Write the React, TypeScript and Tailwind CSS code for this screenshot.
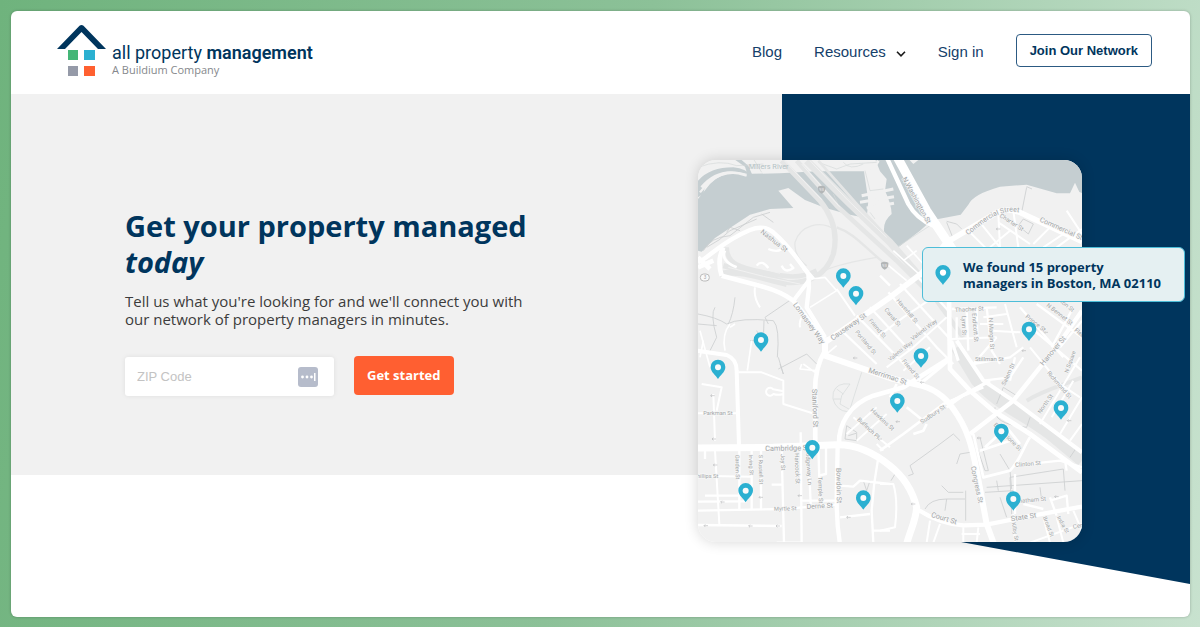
import React from "react";

type Line = { d: string; w: number };
type Label = { t: string; x: number; y: number; r: number; s: number };

const HIGHWAYS: Line[] = [
  { d: "M275 30L390 150C430 200 445 250 430 310C410 375 350 400 290 395L100 345", w: 16 },
  { d: "M320 30L440 165L620 330L740 450L820 560", w: 14 },
  { d: "M350 30L470 150L600 275L700 390", w: 22 },
  { d: "M385 30L500 160L620 290", w: 8 },
  { d: "M110 290C110 340 150 350 220 365S330 385 380 360", w: 14 },
  { d: "M90 370C150 355 220 385 290 400", w: 18 },
  { d: "M440 240C390 205 330 225 315 275C312 305 330 330 350 345", w: 4 },
  { d: "M440 230C500 250 530 300 600 350", w: 7 },
  { d: "M400 360C450 340 500 330 560 320", w: 4 },
  { d: "M800 590L860 690C920 760 1000 790 1080 850L1176 930", w: 36 },
  { d: "M1010 750C1060 720 1100 710 1176 680", w: 12 },
];

const MINOR: Line[] = [
  { d: "M410 610L440 585M360 470L440 420L405 380L365 385", w: 5 },
  { d: "M440 415L495 495M330 530Q325 500 350 490M195 410Q190 440 210 470", w: 6 },
  { d: "M235 295Q270 310 285 285M200 345Q215 325 235 352M275 345Q285 370 310 352L300 340", w: 7 },
  { d: "M105 300Q90 330 140 350", w: 8 },
  { d: "M570 375L600 405M500 495L720 720M455 540L560 640M540 470L660 600", w: 7 },
  { d: "M595 425L740 590L790 640M630 400L780 565M680 375L775 480", w: 7 },
  { d: "M560 560L640 500L760 420M590 650L670 590L770 500M640 660L720 590", w: 6 },
  { d: "M610 300L720 400M650 285L700 340L760 310M590 340L650 390M640 330L680 300", w: 5 },
  { d: "M830 235L895 300M870 215L930 290M925 190L930 290M925 215L1020 280M960 240L900 290", w: 6 },
  { d: "M970 180L985 290M1030 280L1080 230M1060 290L1120 250M1100 290L1176 235M1130 180L1176 250", w: 6 },
  { d: "M785 475L920 470M800 500L800 565M830 480L835 600M860 475L862 560M890 470L905 600L930 640", w: 7 },
  { d: "M785 565L920 560M870 520L940 520M905 540L990 545M945 460L980 590M880 500L950 490", w: 6 },
  { d: "M990 470L1120 620M1010 520L1176 660M1040 460L1176 560M1110 590L1176 510M1085 590L1150 470", w: 7 },
  { d: "M920 560L850 640L960 620L1000 590M880 690L960 680L1000 620M960 690L975 620", w: 7 },
  { d: "M1020 590L1110 700L1170 740M1050 820L1170 620M1110 850L1176 740M1085 800L1150 690M1140 870L1176 820", w: 6 },
  { d: "M570 900L640 850L760 760L880 710M700 810L650 770M600 740L620 700M670 850L700 840L710 820", w: 8 },
  { d: "M840 720L770 770M850 850L880 980L960 960C990 930 1000 890 1020 860M885 890L950 830L990 880M870 900L960 870", w: 8 },
  { d: "M970 945L1110 930L1176 950M975 970L975 1090M1125 930L1130 960M1080 1050L1130 1035L1135 1090M1000 1060L1060 1075M1080 1040L1100 1095", w: 7 },
  { d: "M1100 1100L1120 1176M1060 1100L1080 1176M1150 1080L1176 1140M1020 1176L1120 1140L1176 1120M970 1090L975 1176", w: 6 },
  { d: "M145 665L215 665L280 690L280 760L375 790M280 730Q265 735 250 730A12 12 0 1 1 250 716L280 722", w: 6 },
  { d: "M172 660L185 570M40 570L30 620M340 640L375 665M380 660L330 655L335 640", w: 5 },
  { d: "M24 788L145 788M70 730L75 870M35 700L95 710L80 780M24 975L185 978M75 900L88 1120", w: 6 },
  { d: "M24 1053L170 1052M24 1080L280 1075L440 1062M24 1123L275 1126M45 900L45 925M45 1035L145 1035", w: 7 },
  { d: "M148 900L148 1080M185 900L185 1075M213 900L213 1075M275 900L282 1176M245 1002L280 1002", w: 7 },
  { d: "M332 845L335 1176L260 1176M355 900L362 1060M385 890L390 1050M408 890L408 970L385 975M335 1050L440 1050", w: 7 },
  { d: "M565 920Q550 1000 545 1080L550 1176M450 1100L540 1090M450 1005L490 1008L510 990L600 1000M550 1140L600 1140", w: 7 },
  { d: "M470 850L560 770M500 870L590 790M580 900L560 880M490 800L600 890", w: 6 },
  { d: "M570 1000L610 1000Q625 1050 615 1130L570 1140M720 1110L710 1176M750 1120L730 1176M820 1130L820 1176M865 1130L860 1176M815 1150L870 1150", w: 6 },
  { d: "M120 520Q95 550 105 600M120 530L135 520M30 540L60 650", w: 5 },
];

const MAJOR: Line[] = [
  { d: "M24 335C60 320 90 275 180 238Q225 220 255 250C290 280 320 320 355 370L357 410L350 470L405 560", w: 13 },
  { d: "M24 320L60 355M24 350L70 330M100 290Q80 330 95 375", w: 14 },
  { d: "M95 375L200 403Q270 420 310 450L400 565", w: 14 },
  { d: "M310 450L360 385M340 350L370 385", w: 12 },
  { d: "M405 575L600 440L695 368L770 275L910 192Q950 165 1000 190L1176 272", w: 17 },
  { d: "M590 20L655 160Q680 205 730 225", w: 13 },
  { d: "M622 20L710 180L790 300", w: 27 },
  { d: "M775 290L780 655L840 720L910 780L1020 850L1176 965", w: 14 },
  { d: "M800 570L880 690L970 750L1176 905", w: 12 },
  { d: "M785 570L805 630", w: 9 },
  { d: "M405 560L405 615L600 682L680 702Q750 715 790 775C830 830 845 880 860 960L890 1120L912 1180", w: 18 },
  { d: "M840 850L970 750L1110 575L1176 480", w: 13 },
  { d: "M405 600Q375 650 375 720L376 890", w: 14 },
  { d: "M20 892L250 890L440 882Q520 880 600 945C650 985 670 1030 680 1070C678 1110 660 1140 650 1180", w: 21 },
  { d: "M680 1075Q750 1120 820 1124L890 1122L1000 1100L1176 1068", w: 13 },
  { d: "M447 880C445 820 480 760 550 735L640 710L775 625", w: 14 },
  { d: "M443 880L440 1050Q440 1120 450 1180", w: 13 },
  { d: "M20 600L110 613Q140 625 140 660L147 885", w: 12 },
  { d: "M690 700L775 630M770 760L900 690", w: 10 },
];

const FINE =
  "M24 490Q80 500 110 520Q150 500 250 510Q270 530 262 620M135 440Q130 490 115 520M310 442L225 500L235 520M75 470Q60 490 80 560L60 600M24 520L80 525M222 510L220 570L180 570M265 620L280 670L270 640M265 655L350 610L380 640M200 540L210 560" +
  "M40 300Q60 260 120 255L190 200L240 185M110 245L120 230L150 240M215 190L250 215M50 290Q90 270 120 240L200 205" +
  "M770 215L790 265M770 212L800 220L815 235M1010 110L995 185M985 225L1015 250L1030 220L1000 205ZM1010 108L1026 115" +
  "M655 975L670 970L660 945L750 880L790 850L810 870M800 940L810 910L840 905M755 1005L775 1025L820 1025M705 1075Q720 1045 770 1045L825 1045M770 1045L765 1080M827 1020L827 1110M603 990L615 970" +
  "M850 860L885 960L895 960L870 860M915 770Q905 820 1010 830L1020 800M920 760L940 710L980 735M960 980L1120 955L1125 1020M890 1010L1176 990M885 1025L970 1020M930 910L960 960L965 1015M920 990L925 1020M960 980L965 1090M1050 1010L1055 1050M930 1040L950 1100M1140 920L1160 890L1176 905" +
  "M470 825L500 845L500 870L465 865ZM475 855L498 848M520 990L530 1020L540 990M1070 570Q1090 590 1100 575";

const ARROWS: [number, number][] = [
  [68, 735], [72, 865], [76, 943], [98, 1054], [48, 1125], [182, 1126], [264, 1126], [213, 1040], [330, 1035], [476, 1100],
  [496, 622], [570, 865], [624, 813], [697, 695], [670, 1060], [1002, 600], [1068, 545], [1100, 1038], [925, 235], [868, 862], [1138, 810],
];

const LABELS: Label[] = [
  { t: "Nashua St", x: 210, y: 246, r: 38, s: 21 },
  { t: "Lomasney Way", x: 308, y: 462, r: 54, s: 22 },
  { t: "Causeway St", x: 428, y: 570, r: -35, s: 22 },
  { t: "Friend St", x: 535, y: 510, r: 50, s: 18 },
  { t: "Portland St", x: 494, y: 545, r: 50, s: 18 },
  { t: "Canal St", x: 582, y: 478, r: 50, s: 18 },
  { t: "Haverhill St", x: 618, y: 450, r: 50, s: 18 },
  { t: "Valenti Way", x: 668, y: 570, r: -37, s: 18 },
  { t: "Valenti Way", x: 600, y: 632, r: -38, s: 17 },
  { t: "Friend St", x: 635, y: 632, r: 50, s: 18 },
  { t: "N Washington St", x: 636, y: 84, r: 61, s: 21 },
  { t: "Charter St", x: 928, y: 198, r: 33, s: 18 },
  { t: "Commercial St", x: 1048, y: 212, r: 24, s: 21 },
  { t: "Thacher St", x: 795, y: 484, r: -3, s: 18 },
  { t: "Lynn St", x: 815, y: 496, r: 88, s: 18 },
  { t: "Endicott St", x: 846, y: 488, r: 85, s: 18 },
  { t: "N Margin St", x: 896, y: 502, r: 87, s: 18 },
  { t: "N Bennet St", x: 1068, y: 466, r: 38, s: 18 },
  { t: "Prince St", x: 1005, y: 500, r: 38, s: 18 },
  { t: "Tileston St", x: 1080, y: 432, r: 38, s: 18 },
  { t: "Fleet St", x: 1152, y: 540, r: 40, s: 18 },
  { t: "Stillman St", x: 855, y: 630, r: 0, s: 18 },
  { t: "Salem St", x: 945, y: 706, r: -65, s: 18 },
  { t: "Hanover St", x: 1060, y: 646, r: -50, s: 22 },
  { t: "Richmond St", x: 1070, y: 668, r: 49, s: 18 },
  { t: "N Square", x: 1134, y: 668, r: -70, s: 17 },
  { t: "North St", x: 1052, y: 790, r: -55, s: 18 },
  { t: "Merrimac St", x: 534, y: 665, r: 18, s: 22 },
  { t: "Hawkins St", x: 540, y: 780, r: 43, s: 18 },
  { t: "Bulfinch Pl", x: 500, y: 808, r: 43, s: 18 },
  { t: "Sudbury St", x: 696, y: 820, r: -34, s: 18 },
  { t: "Staniford St", x: 366, y: 715, r: 88, s: 22 },
  { t: "Parkman St", x: 40, y: 794, r: 0, s: 17 },
  { t: "Cambridge St", x: 226, y: 901, r: -1, s: 22 },
  { t: "Garden St", x: 136, y: 912, r: 89, s: 17 },
  { t: "Irving St", x: 176, y: 912, r: 87, s: 17 },
  { t: "S Russell St", x: 206, y: 912, r: 89, s: 17 },
  { t: "Joy St", x: 272, y: 910, r: 88, s: 18 },
  { t: "Hancock St", x: 314, y: 908, r: 88, s: 18 },
  { t: "Ridgeway Ln", x: 347, y: 902, r: 86, s: 18 },
  { t: "Temple St", x: 384, y: 978, r: 88, s: 18 },
  { t: "Bowdoin St", x: 439, y: 952, r: 89, s: 21 },
  { t: "Phillips St", x: 10, y: 983, r: 0, s: 17 },
  { t: "Myrtle St", x: 252, y: 1080, r: -1, s: 17 },
  { t: "Derne St", x: 350, y: 1075, r: -3, s: 21 },
  { t: "Congress St", x: 842, y: 948, r: 78, s: 21 },
  { t: "Court St", x: 722, y: 1098, r: 17, s: 22 },
  { t: "State St", x: 964, y: 1112, r: -9, s: 22 },
  { t: "Clinton St", x: 976, y: 949, r: -5, s: 18 },
  { t: "Blackstone St", x: 910, y: 824, r: 45, s: 18 },
  { t: "Chatham St", x: 975, y: 1058, r: -5, s: 18 },
  { t: "Kilby St", x: 965, y: 1116, r: 80, s: 17 },
  { t: "Broad St", x: 1058, y: 1100, r: 68, s: 17 },
  { t: "India St", x: 1100, y: 1100, r: 60, s: 17 },
  { t: "Central", x: 1150, y: 1134, r: -10, s: 18 },
];

const PINS: [number, number][] = [
  [460, 411], [498, 464], [213, 603], [84, 685], [167, 1055], [367, 926], [520, 1077],
  [693, 651], [1017, 571], [622, 786], [1113, 807], [934, 877], [970, 1080],
];

const PIN_PATH = "M0 0C-6 -11 -22 -20 -22 -36A22 22 0 0 1 22 -36C22 -20 6 -11 0 0Z";

function Roads({ lines, color }: { lines: Line[]; color: string }) {
  return (
    <g stroke={color} fill="none" strokeLinejoin="round">
      {lines.map((l) => (
        <path key={l.d} d={l.d} strokeWidth={l.w} />
      ))}
    </g>
  );
}

function CityMap() {
  return (
    <svg
      viewBox="24 28 1152 1146"
      className="block w-full rounded-[18px] shadow-[0_0_14px_rgba(0,0,0,0.16)]"
      role="img"
      aria-label="Map of property managers in Boston"
    >
      <rect x="20" y="20" width="1160" height="1160" fill="#f1f1f1" />
      <g fill="#c5ced1">
        <path d="M24 145L60 100Q90 65 150 70L270 68L380 62L522 62L535 150L530 203L470 190L400 170L345 148L295 112L265 120L310 172L240 175L180 192L130 225L75 262L35 303L24 300Z" />
        <path d="M24 90Q60 50 130 50Q170 55 180 72L165 68Q110 52 70 80Q45 95 40 130L24 140Z" />
        <path d="M150 24L175 45L188 75L172 70L165 48L130 24Z" />
        <path d="M555 24L1180 24L1180 128L1168 124L1155 96L1140 128L1100 128L1010 102L930 108Q850 130 835 162L812 192L745 205L710 222L690 240L625 290L606 288Q588 278 582 240Q580 210 605 190Q604 160 585 120L590 85L570 62Z" />
      </g>
      <path d="M34 110Q90 45 170 75M30 125Q60 85 100 70" stroke="#f1f1f1" strokeWidth="7" fill="none" />
      <path d="M530 60L545 62L565 30M515 135L610 115M510 155L612 138M530 172L612 158" stroke="#f1f1f1" strokeWidth="9" fill="none" />
      <path d="M655 24L670 40L690 24Z" fill="#f1f1f1" />
      <g fill="none" stroke="#d5d9da" strokeWidth="2">
        <path d="M24 50Q90 25 140 45L220 40M190 24L215 65M385 35L440 55L480 40L560 35M460 35Q480 60 520 40M525 60L540 120L580 115" />
        <path d="M430 130L442 155M540 185L555 205M620 290L720 225M430 725Q440 695 480 700L455 735L450 760L485 780Q455 790 435 760Q425 745 430 725ZM440 715L460 730M430 745L452 745M515 665L480 775" />
      </g>
      <Roads lines={HIGHWAYS} color="#e5e6e6" />
      <path d="M283 30L395 147M360 30L475 150L590 260M335 40L450 170M120 300Q150 340 270 368M115 350Q220 380 330 400" stroke="#f1f1f1" strokeWidth="3" fill="none" />
      <path d={FINE} stroke="#cdcfd0" strokeWidth="2.5" fill="none" />
      <Roads lines={MINOR} color="#ffffff" />
      <Roads lines={MAJOR} color="#ffffff" />
      <g stroke="#b5b7b8" strokeWidth="1.8" fill="none">
        {ARROWS.map(([x, y]) => (
          <path key={`${x}-${y}`} d="M-6 0H6M-6 0L-2 -4M-6 0L-2 4" transform={`translate(${x} ${y})`} />
        ))}
      </g>
      <g>
        <rect x="31" y="370" width="27" height="21" rx="10" fill="#fafafa" stroke="#bbb" strokeWidth="3" />
        <path d="M384 108Q395 103 406 108Q408 124 395 129Q382 124 384 108ZM573 336Q584 330 595 336Q597 352 584 357Q571 352 573 336Z" fill="#b3b6b7" />
      </g>
      <g fontFamily="Roboto, sans-serif" fill="#a3a6a7" stroke="#f7f7f7" strokeWidth="4" strokeLinejoin="round" paintOrder="stroke">
        {LABELS.map((l) => (
          <text key={`${l.t}-${l.x}`} fontSize={l.s} transform={`translate(${l.x} ${l.y}) rotate(${l.r})`}>
            {l.t}
          </text>
        ))}
        <path id="commercial-street" d="M834 254C870 225 900 200 930 190S965 180 1010 190" fill="none" stroke="none" />
        <text fontSize="21">
          <textPath href="#commercial-street">Commercial Street</textPath>
        </text>
        <text fontSize="14" x="41" y="386" stroke="none">3</text>
        <text fontSize="13" x="387" y="122" fill="#f1f1f1" stroke="none">93</text>
        <text fontSize="13" x="576" y="350" fill="#f1f1f1" stroke="none">93</text>
      </g>
      <text x="176" y="55" fontSize="22" fontFamily="Roboto, sans-serif" fill="#b4c2c5">Millers River</text>
      {PINS.map(([x, y]) => (
        <g key={`${x}-${y}`} transform={`translate(${x} ${y})`}>
          <path d={PIN_PATH} fill="#2bb0d1" />
          <circle cx="0" cy="-35" r="9" fill="#fafafa" />
        </g>
      ))}
    </svg>
  );
}

function Logo() {
  return (
    <a href="#" className="mb-1 flex items-end gap-1.5" aria-label="all property management, A Buildium Company">
      <svg viewBox="0 0 49 52" className="h-[52px] w-[49px]" aria-hidden="true">
        <path d="M0 24L22.500 .8Q24.500 -.8 26.500 .8L49 24H41L24.500 7L8 24Z" fill="#00355d" />
        <rect x="11" y="25" width="10" height="10" fill="#44b677" />
        <rect x="27" y="25" width="11" height="10" fill="#2bb0d1" />
        <rect x="11" y="41" width="10" height="10" fill="#959aa8" />
        <rect x="27" y="41" width="11" height="10" fill="#ff6030" />
      </svg>
      <span className="flex flex-col text-[#00355d]">
        <span className="font-[Roboto,sans-serif] text-[18px] leading-5">
          all property <span className="font-semibold">management</span>
        </span>
        <span className="font-['Open_Sans',sans-serif] text-[11px] leading-[14px] text-[#85888c]">A Buildium Company</span>
      </span>
    </a>
  );
}

function Header() {
  return (
    <header className="flex h-[83px] items-center justify-between pr-[38px] pl-[46px]">
      <Logo />
      <nav className="flex items-center gap-8 text-[15px] text-[#14406a]">
        <a href="#">Blog</a>
        <button type="button" className="flex items-center gap-2.5">
          Resources
          <svg viewBox="0 0 10 6" className="mt-0.5 h-1.5 w-2.5" fill="none" stroke="#1a1a1a" strokeWidth="1.6" aria-hidden="true">
            <path d="M1 .8L5 4.800L9 .8" />
          </svg>
        </button>
        <a href="#">Sign in</a>
        <a href="#" className="-mt-1 flex h-[33px] items-center rounded border border-[#2c5a83] px-[13px] text-[13px] font-bold text-[#00355d]">
          Join Our Network
        </a>
      </nav>
    </header>
  );
}

function SearchForm() {
  return (
    <form className="mt-7 flex items-start gap-5" onSubmit={(e) => e.preventDefault()}>
      <div className="relative">
        <input
          type="text"
          aria-label="ZIP Code"
          placeholder="ZIP Code"
          className="mt-px h-[39px] w-[209px] rounded-[3px] bg-white pr-12 pl-3 text-[13px] text-[#333] shadow-[0_0_5px_rgba(0,0,0,0.08)] outline-none placeholder:text-[#c3c3c3]"
        />
        <svg viewBox="0 0 20 20" className="absolute top-[11px] right-4 size-5" aria-hidden="true">
          <rect width="20" height="20" rx="3" fill="#b6bccb" />
          <circle cx="4.500" cy="10" r="1.400" fill="#fff" />
          <circle cx="9" cy="10" r="1.400" fill="#fff" />
          <circle cx="13.500" cy="10" r="1.400" fill="#fff" />
          <rect x="16" y="6" width="1.500" height="8" fill="#fff" />
        </svg>
      </div>
      <button type="submit" className="h-[39px] rounded bg-[#ff5f31] px-[13px] font-['Open_Sans',sans-serif] text-[13px] font-bold text-white">
        Get started
      </button>
    </form>
  );
}

function FoundNotice() {
  return (
    <div className="absolute top-[87px] -right-[103px] flex h-[55px] w-[263px] items-center gap-3 rounded-md border border-[#4dbdd8] bg-[#e5f0f2] pl-3">
      <svg viewBox="-22 -58 44 58" className="h-5 w-4" aria-hidden="true">
        <path d={PIN_PATH} fill="#2bb0d1" />
        <circle cx="0" cy="-36" r="9" fill="#fff" />
      </svg>
      <p className="font-['Open_Sans',sans-serif] text-[13px] leading-4 font-bold text-[#00355d]">
        We found 15 property
        <br />
        managers in Boston, MA 02110
      </p>
    </div>
  );
}

export default function App() {
  return (
    <div className="flex min-h-screen flex-col bg-[linear-gradient(100deg,#6fb37d,#8cc198_50%,#c8e2cf)] pt-[11px] pr-2.5 pb-2.5 pl-[11px] font-['Liberation_Sans',Arial,sans-serif]">
      <div className="flex grow flex-col overflow-hidden rounded-md bg-white shadow-[0_0_3px_rgba(0,0,0,0.25)]">
        <Header />
        <main className="grid grow grid-cols-1 grid-rows-[381px_1fr]">
          <div className="col-start-1 row-start-1 bg-[#f1f1f1]" />
          <div className="col-start-1 row-span-2 row-start-1 h-[490px] w-[408px] justify-self-end bg-[#00355d] [clip-path:polygon(0_0,100%_0,100%_100%,0_84.7%)]" />
          <div className="col-start-1 row-span-2 row-start-1 flex items-start justify-between gap-8 pr-[108px] pl-[114px]">
            <section className="w-[420px] pt-[114px]">
              <h1 className="font-['Open_Sans',sans-serif] text-[29px] leading-9 font-bold text-[#00355d]">
                Get your property managed
                <br />
                <em>today</em>
              </h1>
              <p className="mt-3 font-['Open_Sans',sans-serif] text-[15px] leading-[18px] text-[#3c3c3c]">
                Tell us what you're looking for and we'll connect you with our network of property managers in minutes.
              </p>
              <SearchForm />
            </section>
            <div className="relative mt-[66px] w-[384px] shrink-0">
              <CityMap />
              <FoundNotice />
            </div>
          </div>
        </main>
      </div>
    </div>
  );
}
